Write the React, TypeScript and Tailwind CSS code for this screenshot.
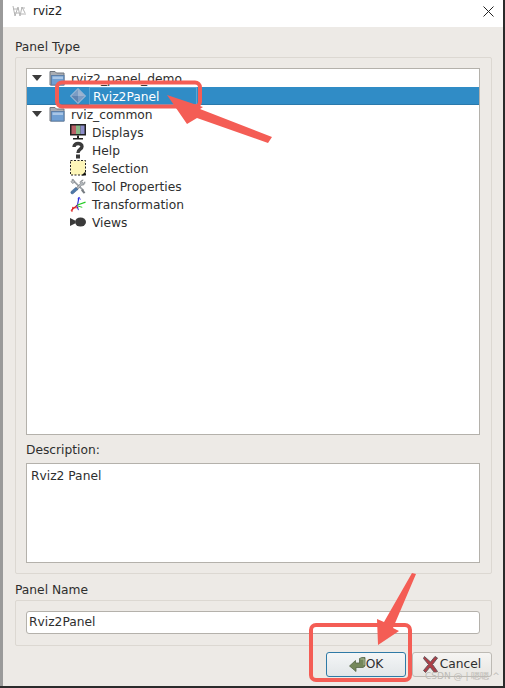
const font = { fontFamily: '"DejaVu Sans", sans-serif' };

const Arrow = () => (
  <svg width="10" height="6" viewBox="0 0 10 6" className="shrink-0">
    <path d="M0 0h10L5 6z" fill="#3c3c3c" />
  </svg>
);

const FolderIcon = () => (
  <svg width="16" height="16" viewBox="0 0 16 16" className="shrink-0">
    <path d="M1 1.500h5l1.500 1.500H15v12H1z" fill="#a9adb3" stroke="#70767e" />
    <rect x="2.500" y="5.500" width="12.500" height="9.500" fill="#6f9fd3" stroke="#5d7fa8" />
    <rect x="3.500" y="6.500" width="10.500" height="2.500" fill="#a9c6e6" />
  </svg>
);

const PanelIcon = () => (
  <svg width="16" height="16" viewBox="0 0 16 16" className="shrink-0">
    <path d="M8 0.500L15.500 8 8 15.500 0.500 8z" fill="#7b9cc4" stroke="#c7d3e2" strokeWidth="0.800" />
    <path d="M8 1.500L14.500 8H8z" fill="#9db4d0" />
    <path d="M8 14.500L1.500 8H8z" fill="#5f83b0" />
  </svg>
);

const DisplaysIcon = () => (
  <svg width="16" height="16" viewBox="0 0 16 16">
    <rect x="0" y="0" width="16" height="11.500" fill="#222" />
    <rect x="1.500" y="1.500" width="4.500" height="8.500" fill="#b85f66" />
    <rect x="6" y="1.500" width="4.500" height="8.500" fill="#86b886" />
    <rect x="10.500" y="1.500" width="4" height="8.500" fill="#8d8dc9" />
    <rect x="7" y="11.500" width="2" height="2.500" fill="#222" />
    <rect x="3" y="14" width="10" height="1.500" fill="#222" />
  </svg>
);

const HelpIcon = () => (
  <svg width="16" height="18" viewBox="0 0 16 18">
    <path d="M4 6C4 1.500 12 1.500 12 5.500C12 8.500 8 8 8 12" fill="none" stroke="#3a3a3a" strokeWidth="3.400" />
    <rect x="6" y="13.500" width="4" height="4" fill="#3a3a3a" />
  </svg>
);

const SelectionIcon = () => (
  <svg width="16" height="16" viewBox="0 0 16 16">
    <rect x="0.500" y="0.500" width="15" height="14.500" fill="#fdf6b8" stroke="#222" strokeDasharray="2 1.500" />
    <path d="M11.500 15.500l4-4v4z" fill="#111" />
  </svg>
);

const ToolIcon = () => (
  <svg width="17" height="17" viewBox="0 0 17 17">
    <path d="M2 1L14.500 13" stroke="#9a9fa4" strokeWidth="1.800" />
    <path d="M1 3.500L3 5.500 5 3.500 3.500 1z" fill="#b7bcc0" stroke="#6e7378" strokeWidth="0.600" />
    <path d="M12.500 12L15.500 15.500" stroke="#777c81" strokeWidth="2.200" />
    <path d="M14 1.500C11 2 10 4 11 5.500L6 10.500 8 12 12.500 7C14.500 7.500 16 6 16 3.500L14 5 12.500 3.500z" fill="#b3b7bb" stroke="#70757a" strokeWidth="0.600" />
    <path d="M6 9.500L1 14C0.500 16 2 17 3.500 16L8.500 11.500z" fill="#4c78a8" stroke="#3a5f88" strokeWidth="0.600" />
  </svg>
);

const TransformIcon = () => (
  <svg width="17" height="17" viewBox="0 0 17 17" fill="none">
    <path d="M8 9L9.500 1" stroke="#2222dd" strokeWidth="1.200" />
    <path d="M8 2.500L10 1 11 3.500" stroke="#2222dd" strokeWidth="0.800" />
    <path d="M8 9L16.500 6" stroke="#22cc22" strokeWidth="1.200" />
    <path d="M8 9L1 15" stroke="#dd2222" strokeWidth="1.300" />
    <path d="M2 16.500L3 11M3 12L9 12" stroke="#dd2222" strokeWidth="1" />
    <path d="M7 9L9 14.500" stroke="#2222dd" strokeWidth="1" />
    <path d="M8 10L13 11.500" stroke="#22cc22" strokeWidth="1" />
  </svg>
);

const ViewsIcon = () => (
  <svg width="16" height="12" viewBox="0 0 16 12">
    <path d="M0 2L5 4.500V7.500L0 10z" fill="#3a3a3a" />
    <ellipse cx="10.500" cy="6" rx="5.500" ry="4.500" fill="#3a3a3a" />
  </svg>
);

const OkIcon = () => (
  <svg width="17" height="15" viewBox="0 0 17 15">
    <path d="M0.500 9L6.500 3.500V6H10.500V1.500L13 0.500H16V9L14 10.500H7V14.500z" fill="#74875a" stroke="#566448" strokeWidth="0.800" />
    <path d="M11.500 2H15V8" stroke="#a7b592" strokeWidth="1" fill="none" />
  </svg>
);

const CancelIcon = () => (
  <svg width="15" height="17" viewBox="0 0 15 17">
    <path d="M1.500 0.500L7.500 6 12 0.500 14.500 2 9.500 8.500 14.500 15.500 11.500 16.500 7 11 2.500 16.500 0.500 14.500 5.500 8.500 0.500 2.500z" fill="#ad3f46" stroke="#66555c" strokeWidth="1" />
  </svg>
);

const tools = [
  { label: 'Displays', icon: <DisplaysIcon /> },
  { label: 'Help', icon: <HelpIcon /> },
  { label: 'Selection', icon: <SelectionIcon /> },
  { label: 'Tool Properties', icon: <ToolIcon /> },
  { label: 'Transformation', icon: <TransformIcon /> },
  { label: 'Views', icon: <ViewsIcon /> },
];

const Annotations = () => (
  <svg width="505" height="688" viewBox="0 0 505 688" className="absolute left-0 top-0 pointer-events-none">
    <rect x="57" y="82.500" width="143" height="24" rx="5" fill="none" stroke="#f45d55" strokeWidth="4" />
    <rect x="311" y="625" width="99" height="55" rx="5" fill="none" stroke="#f45d55" strokeWidth="4" />
    <polygon points="167,95 203,107 200,109 272,137 268,143 197,118 187,124" fill="#f45d55" />
    <polygon points="412,573 416,574 393,628 399,631 378,645 377,619 384,622" fill="#f45d55" />
  </svg>
);

export default function App() {
  return (
    <div className="relative w-[505px] h-[688px] overflow-hidden flex bg-[#2b2b2b] text-[12.25px] text-[#2e2e2e]" style={font}>
      <div className="w-[3px] h-[686px] shrink-0 bg-[#9a9a9a]" />
      <div className="w-[500px] h-[686px] flex flex-col shrink-0 bg-[#edeae6]">
        <div className="h-[27px] shrink-0 bg-white flex items-center pb-[5px] pl-[9px] pr-[9px] text-[#222]">
          <svg width="15" height="13" viewBox="0 0 15 13" className="shrink-0" fill="none" stroke="#b5b5b5" strokeWidth="1">
            <path d="M1 1l2 10 3-9 2 9 2-9 3 6M1 4h6M9 3h4M2 8h5M9 9h5" />
          </svg>
          <span className="ml-[6px] text-[12px]">rviz2</span>
          <svg width="11" height="11" viewBox="0 0 11 11" className="ml-auto" stroke="#222" strokeWidth="1">
            <path d="M0.500 0.500L10.500 10.500M10.500 0.500L0.500 10.500" />
          </svg>
        </div>

        <div className="flex flex-col pl-[12px] pr-[11px] flex-1">
          <div className="h-[30px] flex items-end pb-[1px]">Panel Type</div>
          <div className="h-[517px] border border-[#dcd8d2] rounded-[2px] flex flex-col pl-[10px] pr-[11px] pt-[10px]">
            <div className="h-[367px] bg-white border border-[#b4b1ab] flex flex-col">
              <div className="h-[18px] flex items-center pl-[5px]">
                <Arrow />
                <span className="ml-[7px]"><FolderIcon /></span>
                <span className="ml-[6px] mt-[2px]">rviz2_panel_demo</span>
              </div>
              <div className="h-[18px] flex items-center bg-[#308cc6] text-white pl-[43px] shadow-[inset_0_-1px_0_#2a79ab]">
                <PanelIcon />
                <span className="ml-[3px] pl-[3px] h-full w-[108px] flex items-center border border-[#5aa5d4]">
                  <span className="mt-[2px]">Rviz2Panel</span>
                </span>
              </div>
              <div className="h-[18px] flex items-center pl-[5px]">
                <Arrow />
                <span className="ml-[7px]"><FolderIcon /></span>
                <span className="ml-[6px] mt-[2px]">rviz_common</span>
              </div>
              {tools.map((t) => (
                <div key={t.label} className="h-[18px] flex items-center pl-[43px]">
                  <span className="w-[16px] flex justify-center shrink-0">{t.icon}</span>
                  <span className="ml-[6px] mt-[2px]">{t.label}</span>
                </div>
              ))}
            </div>
            <div className="h-[28px] flex items-center pt-[2px]">Description:</div>
            <div className="h-[100px] bg-white border border-[#b4b1ab] px-[4px] pt-[3px]">Rviz2 Panel</div>
          </div>

          <div className="h-[26px] flex items-end pb-[1px]">Panel Name</div>
          <div className="h-[46px] border border-[#dcd8d2] rounded-[2px] pl-[10px] pr-[11px] pt-[10px]">
            <div className="h-[23px] bg-white border border-[#b4b1ab] rounded-[3px] flex items-center px-[2px]">Rviz2Panel</div>
          </div>

          <div className="flex justify-end gap-[6px] mt-[6px]">
            <button className="w-[80px] h-[25px] border border-[#2f7aa6] rounded-[3px] bg-gradient-to-b from-[#f4f6f7] to-[#e2e6e8] flex items-center justify-center">
              <OkIcon />
              <span>OK</span>
            </button>
            <button className="w-[80px] h-[25px] border border-[#bdbab4] rounded-[3px] bg-gradient-to-b from-[#f6f5f3] to-[#e8e6e2] flex items-center justify-center">
              <CancelIcon />
              <span className="ml-[2px]">Cancel</span>
            </button>
          </div>
        </div>
      </div>
      <div className="w-[2px] shrink-0 bg-[#2b2b2b]" />
      <Annotations />
      <div className="absolute left-[425px] top-[670px] w-[74px] text-[9px] leading-[12px] text-[#bdbbb6] whitespace-nowrap">CSDN @ | 嗯嗯 ^</div>
    </div>
  );
}
